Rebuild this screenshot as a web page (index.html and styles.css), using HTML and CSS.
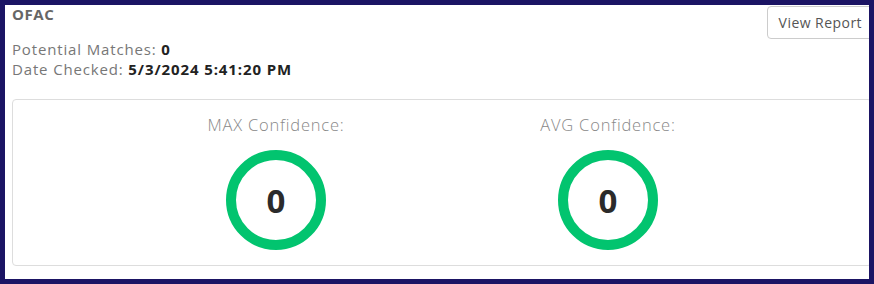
FILE: index.html
```html
<!DOCTYPE html>
<html lang="en">
<head>
    <meta charset="UTF-8">
    <meta name="viewport" content="width=device-width, initial-scale=1.0">
    <title>OFAC Check</title>
    <link rel="stylesheet" href="styles.css">
</head>
<body>
    <div class="frame">
        <div class="panel">
            <div class="panel-head">
                <div class="summary">
                    <div class="panel-title">OFAC</div>
                    <div class="info-line">Potential Matches: <strong>0</strong></div>
                    <div class="info-line">Date Checked: <strong>5/3/2024 5:41:20 PM</strong></div>
                </div>
                <button class="report-btn">View Report</button>
            </div>
            <div class="score-box">
                <div class="score">
                    <div class="score-label">MAX Confidence:</div>
                    <div class="score-ring">0</div>
                </div>
                <div class="score">
                    <div class="score-label">AVG Confidence:</div>
                    <div class="score-ring">0</div>
                </div>
            </div>
        </div>
    </div>
</body>
</html>
```

FILE: styles.css
```css
body { margin: 0; background-color: #1b1464; font-family: "Open Sans", "Liberation Sans", sans-serif; }
.frame { width: 874px; height: 284px; box-sizing: border-box; border: 5px solid #1b1464; background-color: #fff; overflow: hidden; }
.panel { width: 862px; padding-left: 7px; }
.panel-head { display: flex; justify-content: space-between; align-items: flex-start; }
.panel-title { font-size: 15px; font-weight: bold; color: #666; line-height: 18px; margin-bottom: 16px; letter-spacing: 0.6px; }
.info-line { font-size: 15px; color: #777; line-height: 20px; letter-spacing: 0.85px; }
.info-line strong { color: #222; font-size: 15px; letter-spacing: 0.9px; }
.report-btn { margin-top: 1px; height: 33px; padding: 0 11px; background: #fff; border: 1px solid #ccc; border-radius: 4px; font-family: inherit; font-size: 14px; letter-spacing: 0.45px; color: #555; }
.score-box { margin-top: 20px; width: 860px; box-sizing: border-box; height: 167px; border: 1px solid #ddd; border-radius: 4px; padding-top: 14px; display: flex; justify-content: center; }
.score { width: 332px; display: flex; flex-direction: column; align-items: center; }
.score-label { font-size: 16.5px; font-weight: 300; color: #888; line-height: 22px; letter-spacing: 0.8px; }
.score-ring { margin-top: 14px; width: 100px; height: 100px; box-sizing: border-box; border: 10px solid #02c46f; border-radius: 50%; display: flex; align-items: center; justify-content: center; font-size: 33px; font-weight: bold; color: #2b2b2b; }
```
